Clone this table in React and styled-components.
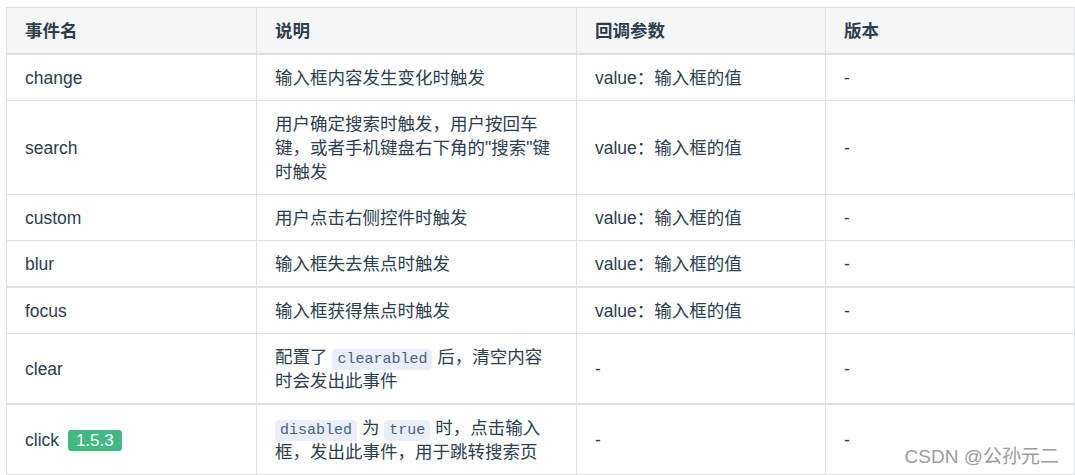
import React from "react"
import styled, { createGlobalStyle } from "styled-components"

const GlobalStyle = createGlobalStyle`
    html, body {
        margin: 0;
        padding: 0;
        background: #fff;
        overflow: hidden;
    }
    body {
        font-family: "Liberation Sans", "Noto Sans CJK SC", sans-serif;
        color: #2c3e50;
    }
`

const Page = styled.div`
    position: relative;
    width: 1075px;
    height: 475px;
    padding: 7px 0 0 6px;
    box-sizing: border-box;
`

const Table = styled.table`
    width: 1068px;
    table-layout: fixed;
    border-collapse: collapse;
    font-size: 17.5px;
    line-height: 24px;
`

const HeadCell = styled.th`
    background-color: #f6f6f6;
    border: 1px solid #dfe2e5;
    border-bottom: 2px solid #dfe2e5;
    padding: 11px 18px 10px;
    text-align: left;
    font-weight: bold;
`

const Row = styled.tr`
    border-bottom: ${props => props.$thick ? "2px" : "1px"} solid #dfe2e5;
`

const Cell = styled.td`
    border-left: 1px solid #dfe2e5;
    border-right: 1px solid #dfe2e5;
    padding: 11px 18px 10px;
    vertical-align: middle;
    word-break: break-all;
`

const Code = styled.code`
    font-family: "Liberation Mono", "DejaVu Sans Mono", monospace;
    font-size: 15px;
    line-height: 16px;
    color: #476582;
    background-color: #e9eefa;
    border-radius: 4px;
    padding: 2px 5px;
`

const Badge = styled.span`
    display: inline-block;
    margin-left: 4px;
    padding: 0 8px;
    height: 21px;
    line-height: 21px;
    font-size: 17px;
    color: #fff;
    background-color: #42b983;
    border-radius: 3px;
`

const Watermark = styled.div`
    position: absolute;
    right: 16px;
    bottom: 7px;
    font-size: 19px;
    color: #9c9c9c;
    text-shadow: 0 0 1px #fff;
`

const rows = [
    { name: "change", desc: "输入框内容发生变化时触发", arg: "value：输入框的值" },
    { name: "search", desc: "用户确定搜索时触发，用户按回车键，或者手机键盘右下角的\"搜索\"键时触发", arg: "value：输入框的值" },
    { name: "custom", desc: "用户点击右侧控件时触发", arg: "value：输入框的值" },
    { name: "blur", desc: "输入框失去焦点时触发", arg: "value：输入框的值", thick: true },
    { name: "focus", desc: "输入框获得焦点时触发", arg: "value：输入框的值" },
    { name: "clear", desc: <>配置了 <Code>clearabled</Code> 后，清空内容时会发出此事件</>, arg: "-", thick: true },
    { name: <>click <Badge>1.5.3</Badge></>, desc: <><Code>disabled</Code> 为 <Code>true</Code> 时，点击输入框，发出此事件，用于跳转搜索页</>, arg: "-" },
]

function App() {
    return (
        <Page>
            <GlobalStyle />
            <Table>
                <colgroup>
                    <col style={{ width: 250 }} />
                    <col style={{ width: 320 }} />
                    <col style={{ width: 249 }} />
                    <col style={{ width: 249 }} />
                </colgroup>
                <thead>
                    <tr>
                        <HeadCell>事件名</HeadCell>
                        <HeadCell>说明</HeadCell>
                        <HeadCell>回调参数</HeadCell>
                        <HeadCell>版本</HeadCell>
                    </tr>
                </thead>
                <tbody>
                    {rows.map((r, i) => (
                        <Row key={i} $thick={r.thick}>
                            <Cell>{r.name}</Cell>
                            <Cell>{r.desc}</Cell>
                            <Cell>{r.arg}</Cell>
                            <Cell>-</Cell>
                        </Row>
                    ))}
                </tbody>
            </Table>
            <Watermark>CSDN @公孙元二</Watermark>
        </Page>
    )
}

export default App
